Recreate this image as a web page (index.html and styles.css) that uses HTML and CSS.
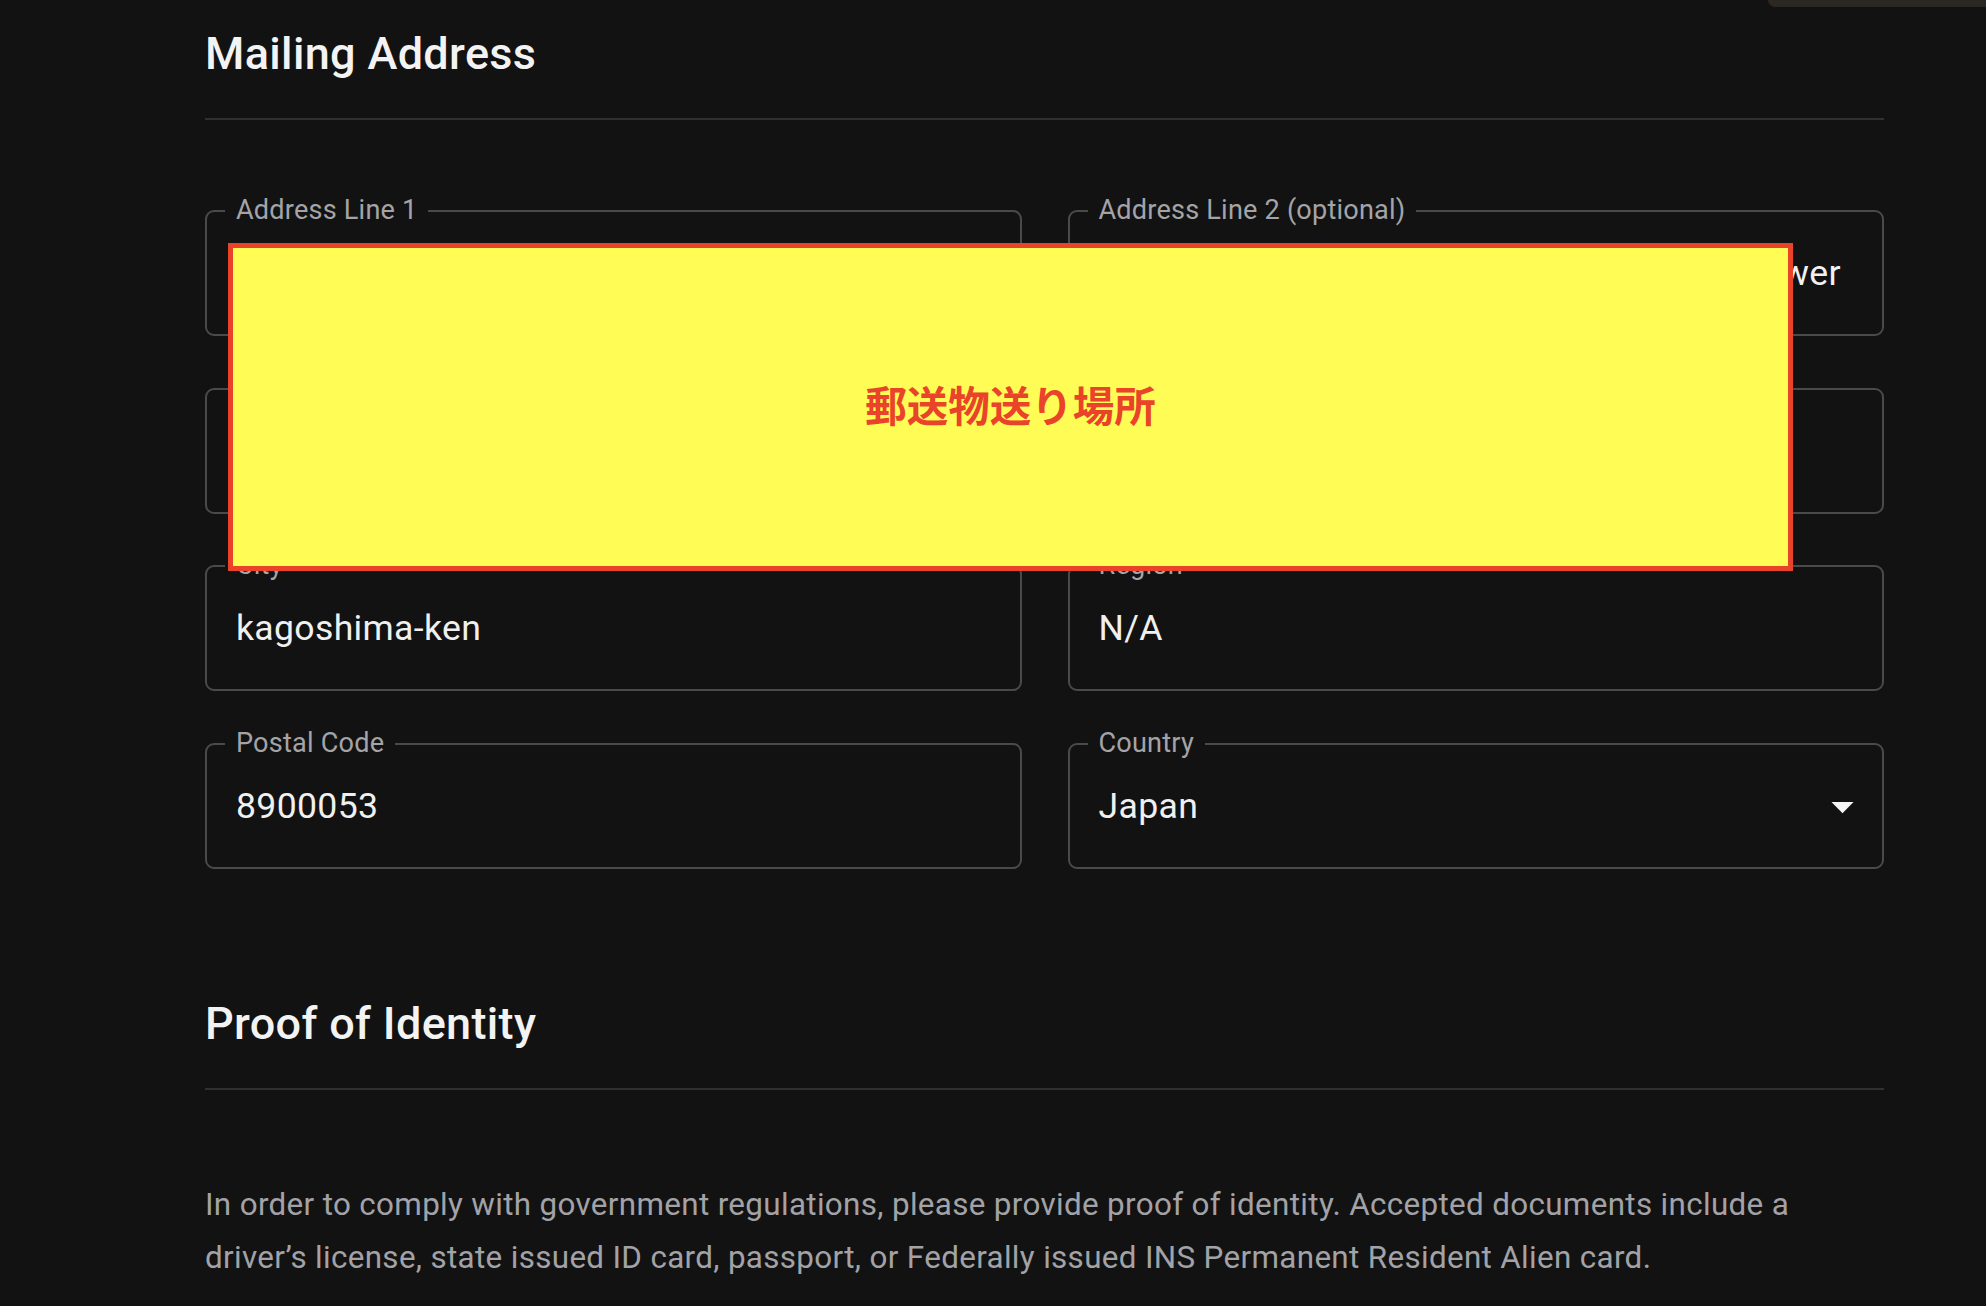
FILE: index.html
```html
<!DOCTYPE html>
<html lang="en">
<head>
<meta charset="utf-8">
<title>Mailing Address</title>
<link rel="stylesheet" href="styles.css">
</head>
<body>
<div class="page">
  <div class="corner-tab"></div>

  <section class="section">
    <h2 class="section-title">Mailing Address</h2>
    <hr class="divider">
    <div class="form-grid">
      <div class="field">
        <span class="field-label">Address Line 1</span>
        <span class="field-value">Sakurajima Yokoyama-cho 1722-3</span>
      </div>
      <div class="field">
        <span class="field-label">Address Line 2 (optional)</span>
        <span class="field-value">Kagoshima Chuo Station Building, Main Tower</span>
      </div>
      <div class="field field-empty">
        <span class="field-placeholder">Address Line 3 (optional)</span>
      </div>
      <div class="field field-empty">
        <span class="field-placeholder">Address Line 4 (optional)</span>
      </div>
      <div class="field">
        <span class="field-label">City</span>
        <span class="field-value">kagoshima-ken</span>
      </div>
      <div class="field">
        <span class="field-label">Region</span>
        <span class="field-value">N/A</span>
      </div>
      <div class="field">
        <span class="field-label">Postal Code</span>
        <span class="field-value">8900053</span>
      </div>
      <div class="field field-select">
        <span class="field-label">Country</span>
        <span class="field-value">Japan</span>
        <svg class="select-arrow" viewBox="0 0 24 24" aria-hidden="true"><path d="M7 10l5 5 5-5z"/></svg>
      </div>
    </div>
  </section>

  <section class="section section-identity">
    <h2 class="section-title">Proof of Identity</h2>
    <hr class="divider">
    <p class="section-text">In order to comply with government regulations, please provide proof of identity. Accepted documents include a driver’s license, state issued ID card, passport, or Federally issued INS Permanent Resident Alien card.</p>
  </section>

  <div class="callout">郵送物送り場所</div>
</div>
</body>
</html>
```

FILE: styles.css
```css
* {
  box-sizing: border-box;
}

html, body {
  margin: 0;
  padding: 0;
  background: #121212;
}

body {
  font-family: Roboto, "Liberation Sans", sans-serif;
  color: #f0f0f0;
  overflow: hidden;
}

.page {
  position: relative;
  min-height: 1306px;
  padding: 17.6px 0 0 205px;
}

.corner-tab {
  position: absolute;
  top: 0;
  right: 0;
  width: 218px;
  height: 7px;
  background: #2b2723;
  border-bottom-left-radius: 16px;
}

.section {
  width: 1679px;
}

.section-title {
  margin: 0;
  font-size: 45px;
  font-weight: 500;
  line-height: 72px;
  letter-spacing: 0.34px;
  color: #f3f3f3;
}

.divider {
  margin: 28.4px 0 0;
  border: 0;
  height: 2px;
  background: #303033;
}

.form-grid {
  margin-top: 90px;
  display: grid;
  grid-template-columns: 1fr 1fr;
  column-gap: 46px;
  row-gap: 51.6px;
}

.field {
  position: relative;
  display: flex;
  align-items: flex-start;
  height: 126px;
  padding: 36px 29px 0;
  border: 2px solid #4a4a4c;
  border-radius: 9px;
}

.field-label {
  position: absolute;
  top: -15px;
  left: 18px;
  padding: 0 11px;
  font-size: 27.1px;
  line-height: 26px;
  letter-spacing: 0.2px;
  color: #a4a4a8;
  background: #121212;
  white-space: nowrap;
}

.field-value,
.field-placeholder {
  font-size: 35.6px;
  line-height: 51px;
  letter-spacing: 0.33px;
  white-space: nowrap;
  overflow: hidden;
}

.field-value {
  color: #f0f0f0;
}

.field-placeholder {
  color: #a4a4a8;
}

.field-select {
  justify-content: space-between;
  padding-right: 13px;
}

.select-arrow {
  width: 53px;
  height: 53px;
  flex: none;
  margin-top: -1px;
  fill: #f5f5f5;
}

.section-identity {
  margin-top: 118.8px;
}

.section-text {
  margin: 89px 0 0;
  font-size: 31.4px;
  line-height: 52.8px;
  letter-spacing: 0.33px;
  color: #a2a2a7;
}

.callout {
  position: absolute;
  left: 228px;
  top: 243px;
  width: 1565px;
  height: 328px;
  display: flex;
  align-items: center;
  justify-content: center;
  padding-bottom: 7px;
  background: #fefc55;
  border: 5px solid #e9432a;
  font-family: "Noto Sans CJK JP", sans-serif;
  font-size: 41.5px;
  font-weight: 700;
  color: #e9432a;
}
```
